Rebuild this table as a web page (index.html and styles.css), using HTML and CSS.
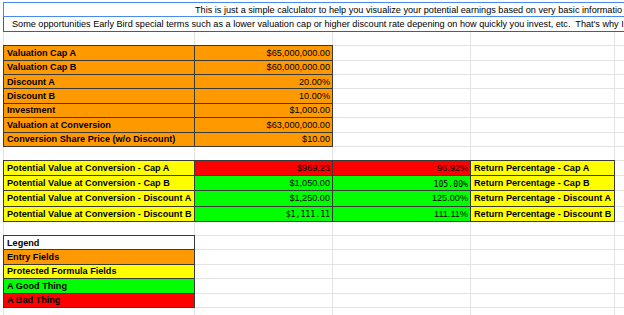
FILE: index.html
```html
<!DOCTYPE html>
<html>
<head>
<meta charset="utf-8">
<link rel="stylesheet" href="styles.css">
</head>
<body>
<div class="sheet">
  <div class="c span sel"><span class="intro">This is just a simple calculator to help you visualize your potential earnings based on very basic informatio</span></div>
  <div class="c span boxed"><span class="intro2">Some opportunities Early Bird special terms such as a lower valuation cap or higher discount rate depening on how quickly you invest, etc.&nbsp; That's why I</span></div>
  <div class="c"></div><div class="c"></div><div class="c"></div><div class="c"></div><div class="c"></div>

  <div class="c o b">Valuation Cap A</div><div class="c o r">$65,000,000.00</div><div class="c"></div><div class="c"></div><div class="c"></div>
  <div class="c o b">Valuation Cap B</div><div class="c o r">$60,000,000.00</div><div class="c"></div><div class="c"></div><div class="c"></div>
  <div class="c o b">Discount A</div><div class="c o r">20.00%</div><div class="c"></div><div class="c"></div><div class="c"></div>
  <div class="c o b">Discount B</div><div class="c o r">10.00%</div><div class="c"></div><div class="c"></div><div class="c"></div>
  <div class="c o b">Investment</div><div class="c o r">$1,000.00</div><div class="c"></div><div class="c"></div><div class="c"></div>
  <div class="c o b">Valuation at Conversion</div><div class="c o r">$63,000,000.00</div><div class="c"></div><div class="c"></div><div class="c"></div>
  <div class="c o b">Conversion Share Price (w/o Discount)</div><div class="c o r">$10.00</div><div class="c"></div><div class="c"></div><div class="c"></div>

  <div class="c"></div><div class="c"></div><div class="c"></div><div class="c"></div><div class="c"></div>

  <div class="c y b">Potential Value at Conversion - Cap A</div><div class="c red r">$969.23</div><div class="c red r">96.92%</div><div class="c y b">Return Percentage - Cap A</div><div class="c"></div>
  <div class="c y b">Potential Value at Conversion - Cap B</div><div class="c g r">$1,050.00</div><div class="c g r mono">105.00%</div><div class="c y b">Return Percentage - Cap B</div><div class="c"></div>
  <div class="c y b">Potential Value at Conversion - Discount A</div><div class="c g r">$1,250.00</div><div class="c g r">125.00%</div><div class="c y b">Return Percentage - Discount A</div><div class="c"></div>
  <div class="c y b">Potential Value at Conversion - Discount B</div><div class="c g r mono">$1,111.11</div><div class="c g r">111.11%</div><div class="c y b">Return Percentage - Discount B</div><div class="c"></div>

  <div class="c"></div><div class="c"></div><div class="c"></div><div class="c"></div><div class="c"></div>

  <div class="c w b">Legend</div><div class="c"></div><div class="c"></div><div class="c"></div><div class="c"></div>
  <div class="c o b">Entry Fields</div><div class="c"></div><div class="c"></div><div class="c"></div><div class="c"></div>
  <div class="c y b">Protected Formula Fields</div><div class="c"></div><div class="c"></div><div class="c"></div><div class="c"></div>
  <div class="c g b">A Good Thing</div><div class="c"></div><div class="c"></div><div class="c"></div><div class="c"></div>
  <div class="c red b">A Bad Thing</div><div class="c"></div><div class="c"></div><div class="c"></div><div class="c"></div>

  <div class="c"></div><div class="c"></div><div class="c"></div><div class="c"></div><div class="c"></div>
</div>
</body>
</html>
```
FILE: styles.css
```css
html, body {
  margin: 0;
  padding: 0;
  background: #ffffff;
  overflow: hidden;
  width: 624px;
  height: 315px;
}
.sheet {
  margin: 2px 0 0 3px;
  padding: 1px 0 0 1px;
  background: #e3e3e3;
  display: grid;
  grid-template-columns: 190px 137px 137px 143px 1fr;
  grid-template-rows: repeat(11, 13.4px) repeat(4, 14.1px) repeat(7, 13.4px);
  gap: 1px;
  font-family: "Liberation Sans", Arial, sans-serif;
  font-size: 9.15px;
  color: #000;
}
.c {
  background: #ffffff;
  display: flex;
  align-items: center;
  padding: 1px 3px 0 3px;
  white-space: nowrap;
  overflow: visible;
  min-width: 0;
  line-height: 1;
}
.span {
  grid-column: 1 / -1;
  overflow: hidden;
}
.sel {
  box-shadow: 0 0 0 1px #4a89ee;
  position: relative;
  z-index: 1;
}
.intro {
  padding-left: 188px;
}
.boxed {
  box-shadow: 0 0 0 1px #5a5a5a;
}
.intro2 {
  padding-left: 5px;
}
.b { font-weight: bold; }
.r { justify-content: flex-end; padding-right: 2px; }
.o { background: #ff9900; box-shadow: 0 0 0 1px #3a3a3a; }
.y { background: #ffff00; box-shadow: 0 0 0 1px #3a3a3a; }
.g { background: #00ff00; box-shadow: 0 0 0 1px #3a3a3a; }
.red { background: #ff0000; box-shadow: 0 0 0 1px #3a3a3a; }
.w { background: #ffffff; box-shadow: 0 0 0 1px #3a3a3a; }
.mono {
  font-family: "DejaVu Sans Mono", monospace;
  font-size: 8.2px;
}
```
